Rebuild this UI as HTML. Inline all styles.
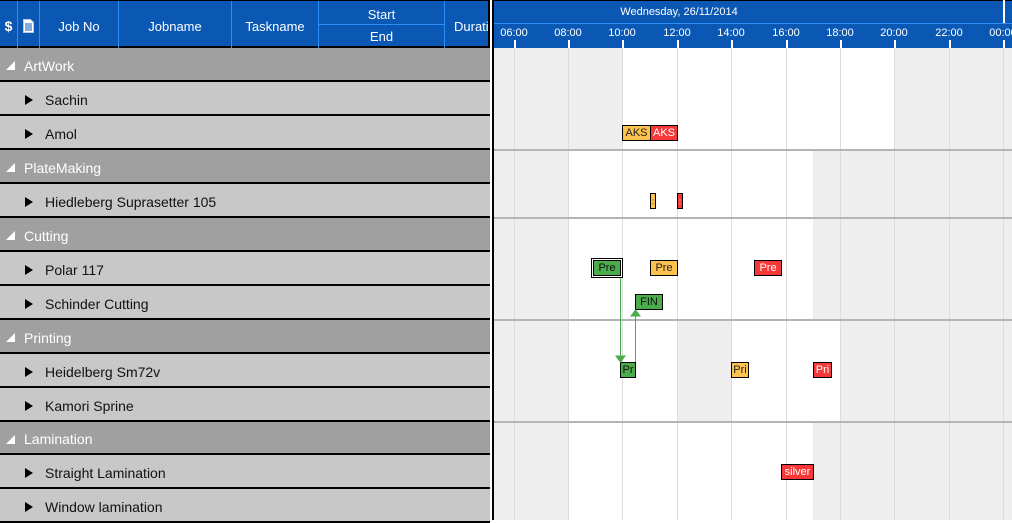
<!DOCTYPE html>
<html><head><meta charset="utf-8"><style>
*{margin:0;padding:0;box-sizing:border-box}
body{width:1012px;height:520px;overflow:hidden;background:#fff;font-family:"Liberation Sans","DejaVu Sans",sans-serif;position:relative}
.a{position:absolute}
.hd{background:#0b58b4;color:#fff;font-size:13px}
.hc{position:absolute;top:1px;height:47px;padding-top:3px;border-right:1px solid #2d8ff5;display:flex;align-items:center;justify-content:center;color:#fff;font-size:13px}
.row{position:absolute;left:0;width:490px;border-bottom:2px solid #000;font-size:14px;display:flex;align-items:center;padding-top:3px}
.g{background:#a0a0a0;color:#fff}
.c{background:#c8c8c8;color:#111}
.g span.t{position:absolute;left:24px}
.c span.t{position:absolute;left:45px}
.tri{position:absolute;left:6px;width:0;height:0;border-left:9px solid transparent;border-bottom:9px solid #fff}
.arr{position:absolute;left:25px;width:0;height:0;border-top:5px solid transparent;border-bottom:5px solid transparent;border-left:8px solid #000}
.gy{position:absolute;background:#eeeeee}
.vl{position:absolute;top:48px;height:472px;width:1px;background:#dcdcdc}
.hl{position:absolute;left:494px;width:518px;height:2px;background:#b4b4b4}
.bar{position:absolute;height:16px;border:1px solid #000;font-size:11px;display:flex;align-items:center;justify-content:center;overflow:hidden;white-space:nowrap}
.y{background:#fdc24e;color:#222}.r{background:#f73838;color:#fff}.gr{background:#4aac4a;color:#111}
.tk{position:absolute;top:40px;width:2px;height:8px;background:#fff}
.tl{position:absolute;top:27px;font-size:11px;color:#fff;width:40px;text-align:center}
</style></head><body>
<div class="a hd" style="left:0;top:0;width:490px;height:48px;border-top:1px solid #000;border-bottom:2px solid #000"></div>
<div class="hc" style="left:0;width:18px;font-weight:bold;font-size:14px">$</div>
<div class="hc" style="left:18px;width:22px"><svg width="11" height="14" viewBox="0 0 11 14"><path d="M0.5 0.5h7l3 3v10h-10z" fill="#fff" stroke="#bcd" stroke-width="1"/><path d="M2 5h7M2 7h7M2 9h7M2 11h7" stroke="#0b58b4" stroke-width="1"/></svg></div>
<div class="hc" style="left:40px;width:79px">Job No</div>
<div class="hc" style="left:119px;width:113px">Jobname</div>
<div class="hc" style="left:232px;width:87px">Taskname</div>
<div class="hc" style="left:319px;width:126px;flex-direction:column;justify-content:flex-start;padding-top:0"><div style="height:24px;width:100%;text-align:center;line-height:27px;border-bottom:1px solid #2d8ff5">Start</div><div style="line-height:24px">End</div></div>
<div class="hc" style="left:445px;width:45px;justify-content:flex-start;padding-left:9px;border-right:none;overflow:hidden">Durati</div>
<div class="a" style="left:488px;top:0;width:2px;height:520px;background:#000"></div>
<div class="a" style="left:492px;top:0;width:2px;height:520px;background:#000"></div>

<div class="row g" style="top:48px;height:34px"><div class="tri"></div><span class="t">ArtWork</span></div>
<div class="row c" style="top:82px;height:34px"><div class="arr"></div><span class="t">Sachin</span></div>
<div class="row c" style="top:116px;height:34px"><div class="arr"></div><span class="t">Amol</span></div>
<div class="row g" style="top:150px;height:34px"><div class="tri"></div><span class="t">PlateMaking</span></div>
<div class="row c" style="top:184px;height:34px"><div class="arr"></div><span class="t">Hiedleberg Suprasetter 105</span></div>
<div class="row g" style="top:218px;height:34px"><div class="tri"></div><span class="t">Cutting</span></div>
<div class="row c" style="top:252px;height:34px"><div class="arr"></div><span class="t">Polar 117</span></div>
<div class="row c" style="top:286px;height:34px"><div class="arr"></div><span class="t">Schinder Cutting</span></div>
<div class="row g" style="top:320px;height:34px"><div class="tri"></div><span class="t">Printing</span></div>
<div class="row c" style="top:354px;height:34px"><div class="arr"></div><span class="t">Heidelberg Sm72v</span></div>
<div class="row c" style="top:388px;height:34px"><div class="arr"></div><span class="t">Kamori Sprine</span></div>
<div class="row g" style="top:422px;height:33px"><div class="tri"></div><span class="t">Lamination</span></div>
<div class="row c" style="top:455px;height:34px"><div class="arr"></div><span class="t">Straight Lamination</span></div>
<div class="row c" style="top:489px;height:34px"><div class="arr"></div><span class="t">Window lamination</span></div>

<div class="gy" style="left:494px;top:48px;width:128px;height:102px"></div>
<div class="gy" style="left:894px;top:48px;width:118px;height:102px"></div>
<div class="gy" style="left:494px;top:150px;width:74px;height:170px"></div>
<div class="gy" style="left:813px;top:150px;width:199px;height:170px"></div>
<div class="gy" style="left:494px;top:320px;width:74px;height:102px"></div>
<div class="gy" style="left:677px;top:320px;width:54px;height:102px"></div>
<div class="gy" style="left:840px;top:320px;width:172px;height:102px"></div>
<div class="gy" style="left:494px;top:422px;width:74px;height:98px"></div>
<div class="gy" style="left:813px;top:422px;width:199px;height:98px"></div>
<div class="vl" style="left:514px"></div><div class="vl" style="left:568px"></div><div class="vl" style="left:622px"></div><div class="vl" style="left:677px"></div><div class="vl" style="left:731px"></div><div class="vl" style="left:786px"></div><div class="vl" style="left:840px"></div><div class="vl" style="left:894px"></div><div class="vl" style="left:949px"></div><div class="vl" style="left:1003px"></div>
<div class="hl" style="top:149px"></div><div class="hl" style="top:217px"></div><div class="hl" style="top:319px"></div><div class="hl" style="top:421px"></div>

<div class="a hd" style="left:494px;top:0;width:518px;height:48px;border-top:1px solid #000"></div>
<div class="a" style="left:494px;top:23px;width:518px;height:1px;background:#2d8ff5"></div>
<div class="a" style="left:1003px;top:0;width:2px;height:23px;background:#fff"></div>
<div class="a" style="left:494px;top:6px;width:370px;text-align:center;color:#fff;font-size:11px">Wednesday, 26/11/2014</div>
<div class="tl" style="left:494px">06:00</div><div class="tl" style="left:548px">08:00</div><div class="tl" style="left:602px">10:00</div><div class="tl" style="left:657px">12:00</div><div class="tl" style="left:711px">14:00</div><div class="tl" style="left:766px">16:00</div><div class="tl" style="left:820px">18:00</div><div class="tl" style="left:874px">20:00</div><div class="tl" style="left:929px">22:00</div><div class="tl" style="left:983px">00:00</div>
<div class="tk" style="left:514px"></div><div class="tk" style="left:568px"></div><div class="tk" style="left:622px"></div><div class="tk" style="left:677px"></div><div class="tk" style="left:731px"></div><div class="tk" style="left:786px"></div><div class="tk" style="left:840px"></div><div class="tk" style="left:894px"></div><div class="tk" style="left:949px"></div><div class="tk" style="left:1003px"></div>

<div class="bar y" style="left:622px;top:125px;width:29px">AKS</div>
<div class="bar r" style="left:650px;top:125px;width:28px">AKS</div>
<div class="bar y" style="left:650px;top:193px;width:6px;font-size:8px">:</div>
<div class="bar r" style="left:677px;top:193px;width:6px;font-size:8px">:</div>
<div class="a" style="left:591px;top:258px;width:32px;height:20px;border:1px solid #000"></div>
<div class="bar gr" style="left:593px;top:260px;width:28px">Pre</div>
<div class="bar y" style="left:650px;top:260px;width:28px">Pre</div>
<div class="bar r" style="left:754px;top:260px;width:28px">Pre</div>
<div class="bar gr" style="left:635px;top:294px;width:28px">FIN</div>
<div class="bar gr" style="left:620px;top:362px;width:16px">Pr</div>
<div class="bar y" style="left:731px;top:362px;width:18px">Pri</div>
<div class="bar r" style="left:813px;top:362px;width:19px">Pri</div>
<div class="bar r" style="left:781px;top:464px;width:33px">silver</div>
<svg class="a" style="left:0;top:0" width="1012" height="520"><g stroke="#4aac4a" stroke-width="1" fill="#4aac4a"><line x1="620.5" y1="278" x2="620.5" y2="358"/><path d="M616 356h9l-4.5 6z"/><line x1="635.5" y1="314" x2="635.5" y2="362"/><path d="M631 316h9l-4.5-6z"/></g></svg>
</body></html>
